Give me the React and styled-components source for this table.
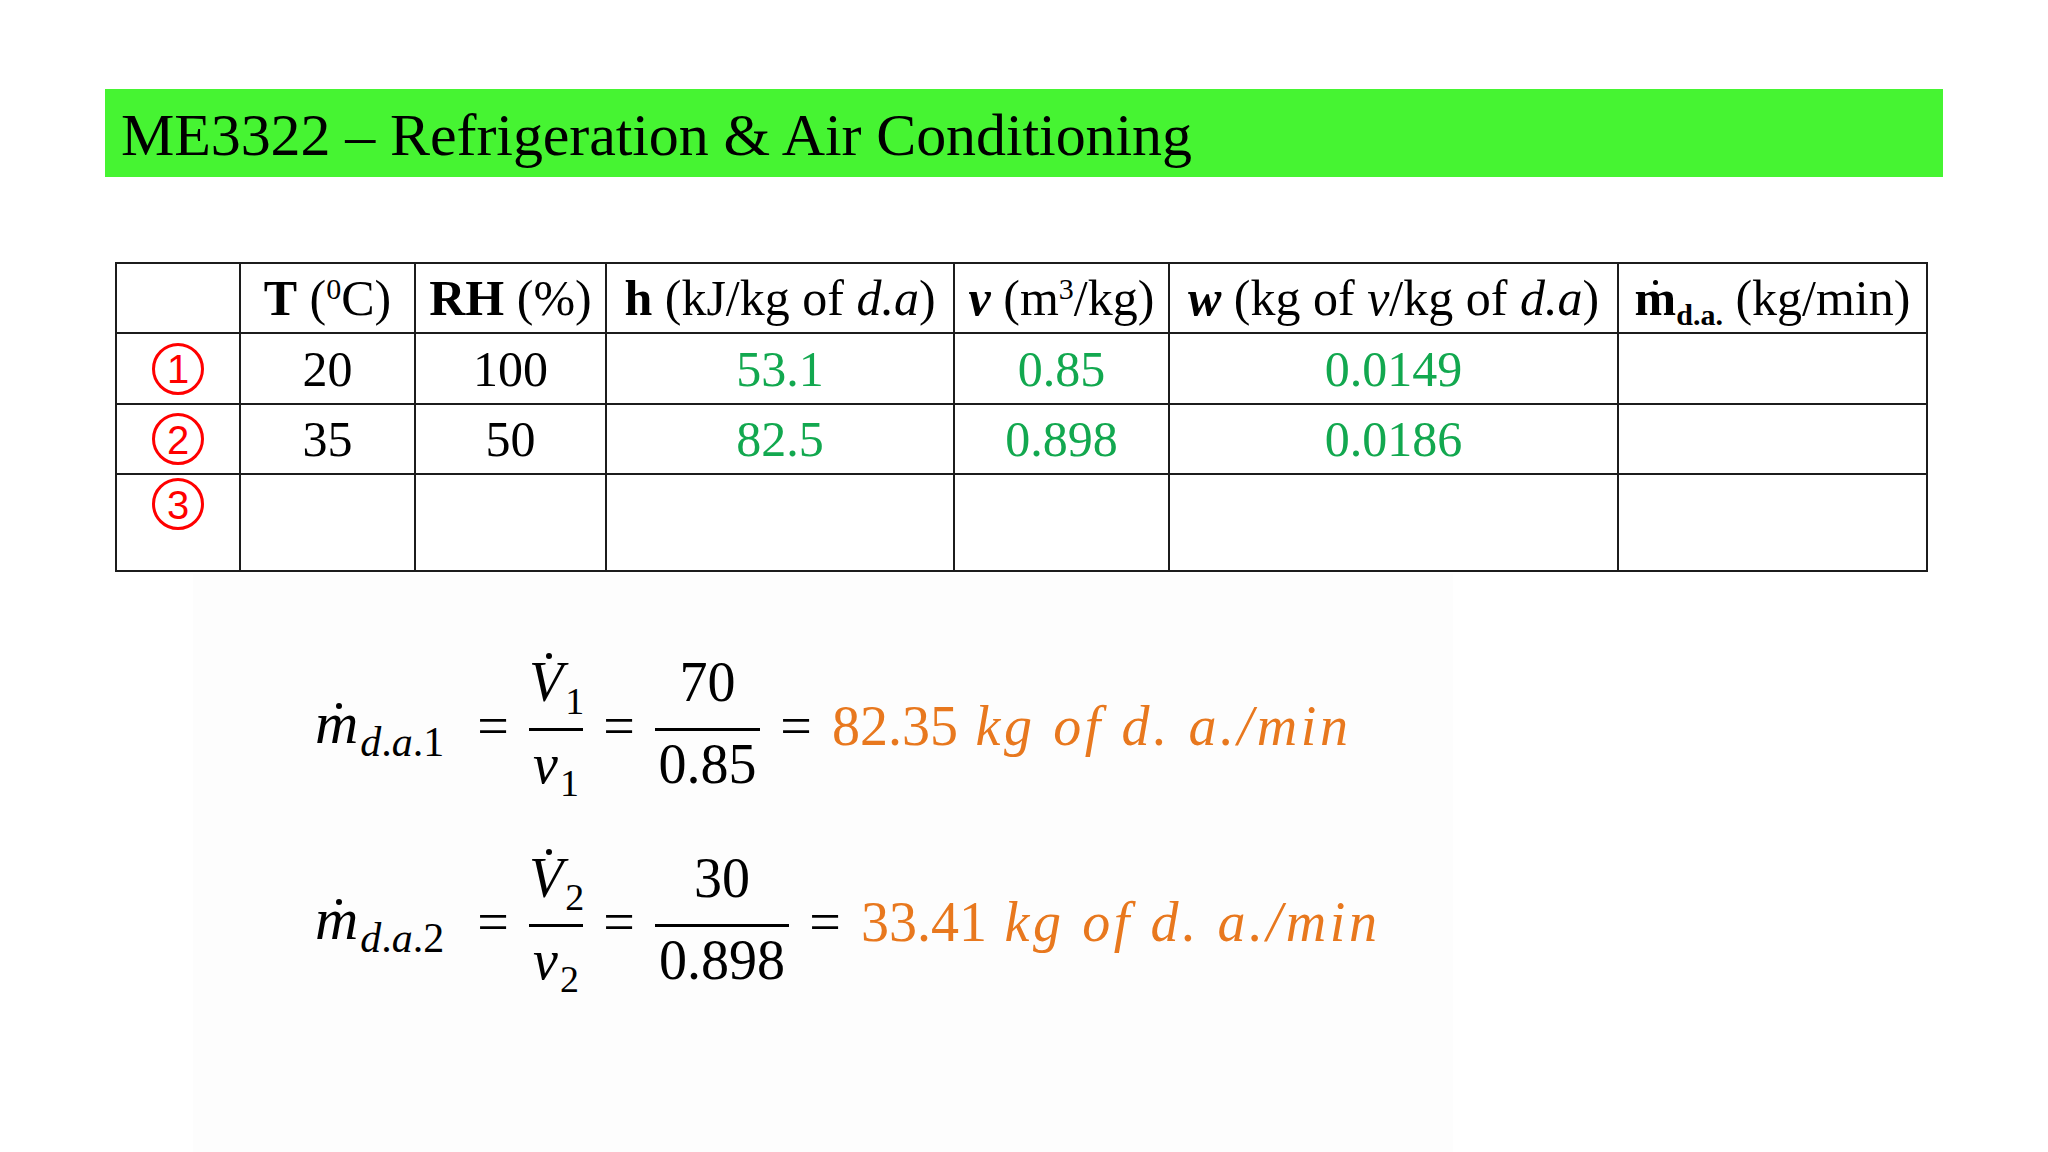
import React from "react";
import styled, { createGlobalStyle } from "styled-components";

const Global = createGlobalStyle`
  html, body { margin: 0; padding: 0; background: #ffffff; }
  body {
    width: 2048px;
    height: 1152px;
    overflow: hidden;
    font-family: "Liberation Serif", "Times New Roman", serif;
    color: #000;
  }
`;

const Slide = styled.main`
  width: 2048px;
  height: 1152px;
  box-sizing: border-box;
  padding-top: 89px;
  display: flex;
  flex-direction: column;
  align-items: flex-start;
`;

const TitleBar = styled.header`
  margin-left: 105px;
  width: 1838px;
  height: 88px;
  background: #46f432;
  box-sizing: border-box;
  padding-left: 16px;
  display: flex;
  align-items: flex-start;
`;

const Title = styled.h1`
  margin: 0;
  font-family: "Liberation Serif", "Times New Roman", serif;
  font-weight: normal;
  font-size: 60px;
  line-height: 92px;
  letter-spacing: -0.1px;
  white-space: nowrap;
`;

const Grid = styled.section`
  margin: 85px 0 0 115px;
  width: 1813px;
  box-sizing: border-box;
  display: grid;
  grid-template-columns: 122px 173px 189px 346px 213px 447px 307px;
  grid-template-rows: 68px 69px 68px 95px;
  gap: 2px;
  padding: 2px;
  background: #1c1c1c;
`;

const Cell = styled.div`
  background: #fff;
  display: flex;
  justify-content: center;
  align-items: ${(p) => (p.$top ? "flex-start" : "center")};
  padding-top: ${(p) => (p.$top ? "3px" : "0")};
  font-size: 50px;
  line-height: 60px;
  white-space: nowrap;
  color: ${(p) => (p.$tone === "green" ? "#12a84f" : "#000")};
`;

const Label = styled.span`
  display: inline-block;
  white-space: pre;
`;

const B = styled.b`
  font-weight: bold;
`;

const BI = styled.b`
  font-weight: bold;
  font-style: italic;
`;

const It = styled.i`
  font-style: italic;
`;

const Sup = styled.span`
  font-size: 30px;
  line-height: 0;
  position: relative;
  top: -16px;
`;

const HeadSub = styled.span`
  font-size: 30px;
  font-weight: bold;
  line-height: 0;
  position: relative;
  top: 10px;
`;

const DotLetter = styled.span`
  position: relative;
  font-style: ${(p) => (p.$upright ? "normal" : "italic")};
  font-weight: ${(p) => (p.$bold ? "bold" : "inherit")};
  &::after {
    content: "";
    position: absolute;
    left: ${(p) => p.$dx};
    top: ${(p) => p.$dy};
    width: ${(p) => p.$size || "6px"};
    height: ${(p) => p.$size || "6px"};
    border-radius: 50%;
    background: currentColor;
  }
`;

const CircleNum = styled.span`
  width: 52px;
  height: 52px;
  box-sizing: border-box;
  border: 3px solid #f00;
  border-radius: 50%;
  display: flex;
  align-items: center;
  justify-content: center;
  color: #f00;
  font-family: "Liberation Sans", Arial, sans-serif;
  font-size: 40px;
  line-height: 1;
  padding-top: 1px;
`;

const EquationPanel = styled.section`
  margin: 2px 0 0 193px;
  width: 1260px;
  flex: 1;
  box-sizing: border-box;
  background: #fdfdfd;
  padding: 78px 0 0 122px;
  display: flex;
  flex-direction: column;
  gap: 41px;
  font-family: "Liberation Serif", "Times New Roman", serif;
  font-size: 56px;
`;

const EqRow = styled.div`
  display: flex;
  align-items: center;
  gap: 19px;
  height: 155px;
`;

const MathText = styled.span`
  display: inline-block;
  line-height: 60px;
  padding-bottom: 8px;
  white-space: pre;
`;

const Lhs = styled(MathText)`
  width: 142px;
`;

const EqSign = styled(MathText)`
  width: 34px;
  text-align: center;
`;

const MSub = styled.span`
  font-size: ${(p) => p.$size || "38px"};
  position: relative;
  top: 13px;
  margin-left: 2px;
`;

const BigM = styled(DotLetter)`
  font-size: 60px;
`;

const Frac = styled.span`
  display: flex;
  flex-direction: column;
  width: ${(p) => p.$w};
  text-align: center;
  white-space: nowrap;
`;

const Num = styled.span`
  display: block;
  line-height: 60px;
  height: 60px;
  padding-bottom: 16px;
`;

const Den = styled.span`
  display: block;
  line-height: 60px;
  height: 60px;
  padding-top: 3px;
  padding-bottom: 13px;
`;

const FracBar = styled.span`
  display: block;
  height: 3px;
  background: #000;
`;

const Result = styled(MathText)`
  color: #e8781e;
`;

const Unit = styled.span`
  font-style: italic;
  letter-spacing: 3.6px;
`;

const rows = [
  { n: 1, T: "20", RH: "100", h: "53.1", v: "0.85", w: "0.0149" },
  { n: 2, T: "35", RH: "50", h: "82.5", v: "0.898", w: "0.0186" },
  { n: 3 },
];

const equations = [
  { i: "1", num: "70", den: "0.85", w: "105px", res: "82.35" },
  { i: "2", num: "30", den: "0.898", w: "134px", res: "33.41" },
];

export default function App() {
  return (
    <>
      <Global />
      <Slide>
        <TitleBar>
          <Title>ME3322 – Refrigeration &amp; Air Conditioning</Title>
        </TitleBar>

        <Grid>
          <Cell />
          <Cell>
            <Label>
              <B>T</B>{" ("}<Sup>0</Sup>{"C)"}
            </Label>
          </Cell>
          <Cell>
            <Label>
              <B>RH</B>{" (%)"}
            </Label>
          </Cell>
          <Cell>
            <Label>
              <B>h</B>{" (kJ/kg of "}<It>d.a</It>{")"}
            </Label>
          </Cell>
          <Cell>
            <Label>
              <BI>v</BI>{" (m"}<Sup>3</Sup>{"/kg)"}
            </Label>
          </Cell>
          <Cell>
            <Label>
              <BI>w</BI>{" (kg of "}<It>v</It>{"/kg of "}<It>d.a</It>{")"}
            </Label>
          </Cell>
          <Cell>
            <Label>
              <DotLetter $upright $bold $dx="18px" $dy="10px" $size="5px">
                m
              </DotLetter>
              <HeadSub>d.a.</HeadSub>
              {" (kg/min)"}
            </Label>
          </Cell>

          {rows.map((r) => {
            const top = r.n === 3;
            return (
              <React.Fragment key={r.n}>
                <Cell $top={top}>
                  <CircleNum>{r.n}</CircleNum>
                </Cell>
                <Cell $top={top}>{r.T}</Cell>
                <Cell $top={top}>{r.RH}</Cell>
                <Cell $top={top} $tone="green">
                  {r.h}
                </Cell>
                <Cell $top={top} $tone="green">
                  {r.v}
                </Cell>
                <Cell $top={top} $tone="green">
                  {r.w}
                </Cell>
                <Cell $top={top} />
              </React.Fragment>
            );
          })}
        </Grid>

        <EquationPanel>
          {equations.map((e) => (
            <EqRow key={e.i}>
              <Lhs>
                <BigM $dx="21px" $dy="13px">
                  m
                </BigM>
                <MSub $size="42px">
                  <It>d</It>.<It>a</It>.{e.i}
                </MSub>
              </Lhs>
              <EqSign>=</EqSign>
              <Frac $w="54px">
                <Num>
                  <DotLetter $dx="17px" $dy="2px">
                    V
                  </DotLetter>
                  <MSub>{e.i}</MSub>
                </Num>
                <FracBar />
                <Den>
                  <It>v</It>
                  <MSub>{e.i}</MSub>
                </Den>
              </Frac>
              <EqSign>=</EqSign>
              <Frac $w={e.w}>
                <Num>{e.num}</Num>
                <FracBar />
                <Den>{e.den}</Den>
              </Frac>
              <EqSign>=</EqSign>
              <Result>
                {e.res}
                <Unit>{" kg of d. a./min"}</Unit>
              </Result>
            </EqRow>
          ))}
        </EquationPanel>
      </Slide>
    </>
  );
}
